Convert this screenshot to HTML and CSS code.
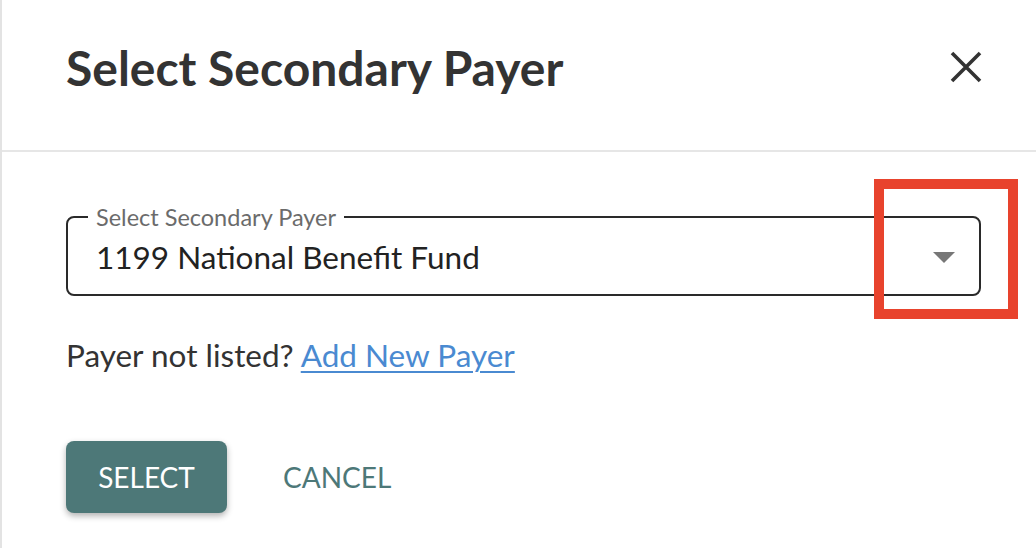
FILE: index.html
```html
<!DOCTYPE html>
<html lang="en">
<head>
    <meta charset="UTF-8">
    <meta name="viewport" content="width=device-width, initial-scale=1.0">
    <title>Select Secondary Payer</title>
    <link rel="stylesheet" href="styles.css">
</head>
<body>
    <div class="dialog">
        <div class="dialog-header">
            <h2>Select Secondary Payer</h2>
            <button class="close-btn" aria-label="Close">
                <svg width="32" height="32" viewBox="0 0 32 32">
                    <path d="M2 2 L30 30 M30 2 L2 30" stroke="#333" stroke-width="3.6" fill="none"/>
                </svg>
            </button>
        </div>

        <div class="dialog-body">
            <div class="select-field">
                <label class="select-label">Select Secondary Payer</label>
                <div class="select-value">1199 National Benefit Fund</div>
                <span class="select-arrow"></span>
            </div>
            <div class="highlight"></div>

            <p class="hint">Payer not listed? <a href="#">Add New Payer</a></p>

            <div class="actions">
                <button class="btn-primary">SELECT</button>
                <button class="btn-text">CANCEL</button>
            </div>
        </div>
    </div>
</body>
</html>
```

FILE: styles.css
```css
body {
    margin: 0;
    font-family: Lato, "Open Sans", sans-serif;
    background: #fff;
    color: #333;
}
.dialog {
    height: 548px;
    border-left: 2px solid #e3e3e3;
    box-sizing: border-box;
}
.dialog-header {
    height: 152px;
    box-sizing: border-box;
    border-bottom: 2px solid #e6e6e6;
    display: flex;
    align-items: center;
    justify-content: space-between;
    padding: 0 54px 16px 64px;
}
.dialog-header h2 {
    margin: 0;
    font-size: 48px;
    font-weight: 700;
    color: #333;
}
.close-btn {
    background: none;
    border: none;
    padding: 0;
    width: 32px;
    height: 32px;
    cursor: pointer;
}
.close-btn svg {
    display: block;
}
.dialog-body {
    position: relative;
    padding: 64px 55px 0 64px;
}
.select-field {
    position: relative;
    height: 80px;
    box-sizing: border-box;
    border: 2px solid #2a2a2a;
    border-radius: 8px;
    padding: 2px 24px 0 28px;
    display: flex;
    align-items: center;
}
.select-label {
    position: absolute;
    left: 20px;
    top: -13px;
    padding: 0 8px;
    background: #fff;
    font-size: 23.5px;
    line-height: 24px;
    color: #6b6b6b;
}
.select-value {
    flex: 1;
    font-size: 31.5px;
    line-height: 40px;
    color: #222;
}
.select-arrow {
    width: 0;
    height: 0;
    border-left: 11px solid transparent;
    border-right: 11px solid transparent;
    border-top: 11px solid #777;
}
.highlight {
    position: absolute;
    left: 872px;
    top: 27px;
    width: 144px;
    height: 140px;
    box-sizing: border-box;
    border: 10px solid #e8432d;
}
.hint {
    margin: 39px 0 0;
    font-size: 31.5px;
    line-height: 40px;
    color: #333;
}
.hint a {
    color: #4a8ad1;
    text-decoration: underline;
    text-underline-offset: 4px;
    text-decoration-thickness: 2px;
}
.actions {
    margin-top: 66px;
    display: flex;
    align-items: center;
    gap: 56px;
}
.btn-primary {
    width: 161px;
    height: 72px;
    background: #4d7878;
    color: #fff;
    border: none;
    border-radius: 8px;
    font-family: Lato, sans-serif;
    font-size: 28px;
    box-shadow: 0 3px 6px rgba(0, 0, 0, 0.3);
}
.btn-text {
    background: none;
    border: none;
    padding: 0;
    color: #4d7878;
    font-family: Lato, sans-serif;
    font-size: 28px;
}
```
